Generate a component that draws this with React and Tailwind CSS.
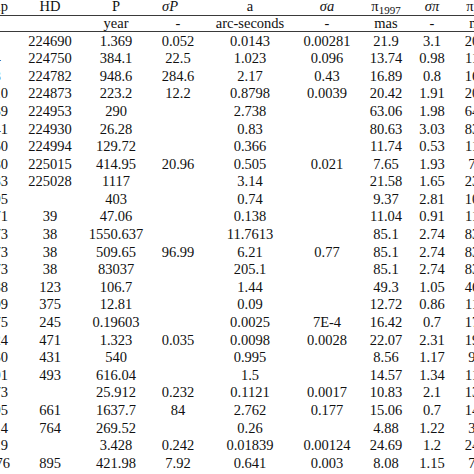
import React from 'react';

const FS = '\u2007';

// hip, hd, p, sigP, a, sigA, plx1997, sigPlx, plx2007
const rows = [
  ['', '224690', '1.369', '0.052', '0.0143', '0.00281', '21.9', '3.1', '20.81'],
  ['4' + FS, '224750', '384.1', '22.5', '1.023', '0.096', '13.74', '0.98', '11.92'],
  ['8' + FS, '224782', '948.6', '284.6', '2.17', '0.43', '16.89', '0.8', '16.44'],
  ['10', '224873', '223.2', '12.2', '0.8798', '0.0039', '20.42', '1.91', '20.03'],
  ['39', '224953', '290', '', '2.738', '', '63.06', '1.98', '64.27'],
  ['41', '224930', '26.28', '', '0.83', '', '80.63', '3.03', '83.04'],
  ['60', '224994', '129.72', '', '0.366', '', '11.74', '0.53', '11.79'],
  ['80', '225015', '414.95', '20.96', '0.505', '0.021', '7.65', '1.93', '7.59'],
  ['83', '225028', '1117', '', '3.14', '', '21.58', '1.65', '23.16'],
  ['95', '', '403', '', '0.74', '', '9.37', '2.81', '10.08'],
  ['171', '39', '47.06', '', '0.138', '', '11.04', '0.91', '11.57'],
  ['473', '38', '1550.637', '', '11.7613', '', '85.1', '2.74', '83.13'],
  ['473', '38', '509.65', '96.99', '6.21', '0.77', '85.1', '2.74', '83.13'],
  ['473', '38', '83037', '', '205.1', '', '85.1', '2.74', '83.13'],
  ['588', '123', '106.7', '', '1.44', '', '49.3', '1.05', '46.51'],
  ['609', '375', '12.81', '', '0.09', '', '12.72', '0.86', '11.17'],
  ['675', '245', '0.19603', '', '0.0025', '7E-4', '16.42', '0.7', '17.27'],
  ['724', '471', '1.323', '0.035', '0.0098', '0.0028', '22.07', '2.31', '19.85'],
  ['730', '431', '540', '', '0.995', '', '8.56', '1.17', '9.38'],
  ['791', '493', '616.04', '', '1.5', '', '14.57', '1.34', '11.52'],
  ['873', '', '25.912', '0.232', '0.1121', '0.0017', '10.83', '2.1', '13.47'],
  ['895', '661', '1637.7', '84', '2.762', '0.177', '15.06', '0.7', '14.72'],
  ['914', '764', '269.52', '', '0.26', '', '4.88', '1.22', '3.95'],
  ['919', '', '3.428', '0.242', '0.01839', '0.00124', '24.69', '1.2', '24.02'],
  ['1076', '895', '421.98', '7.92', '0.641', '0.003', '8.08', '1.15', '7.41'],
];

const cols = 'grid grid-cols-[60px_60px_72px_52px_92px_62px_56px_36px_62px]';

const Sub = ({ children }) => (
  <span className="relative top-[3px] text-[11px]">{children}</span>
);

const Row = ({ cells, className = '', last = false }) => (
  <div className={`${cols} items-center ${className}`}>
    {cells.map((c, i) => (
      <div
        key={i}
        className={`whitespace-nowrap ${
          i === 0 ? (last ? 'text-right pr-[10px]' : 'text-right pr-[12px]') : 'text-center'
        }`}
      >
        {c}
      </div>
    ))}
  </div>
);

export default function App() {
  const header = [
    'Hip',
    'HD',
    'P',
    <span className="italic pr-[16px]">σP</span>,
    'a',
    <span className="italic">σa</span>,
    <span>π<Sub>1997</Sub></span>,
    <span className="italic">σπ</span>,
    <span>π<Sub>2007</Sub></span>,
  ];
  const units = ['', '', 'year', '-', 'arc-seconds', '-', 'mas', '-', 'mas'];

  return (
    <div
      className="w-[474px] h-[474px] overflow-hidden bg-white text-[#111] text-[14.5px] leading-none"
      style={{ fontFamily: '"Liberation Serif", "Times New Roman", serif' }}
    >
      <div className="-ml-[40px] -mt-[2px] w-[552px]">
        <Row cells={header} className="h-[18px] border-b border-[#3a3a3a]" />
        <Row cells={units} className="h-[16px] border-b border-[#3a3a3a]" />
        {rows.map((r, i) => (
          <Row key={i} cells={r} last={i === rows.length - 1} className="h-[17.6px]" />
        ))}
      </div>
    </div>
  );
}
